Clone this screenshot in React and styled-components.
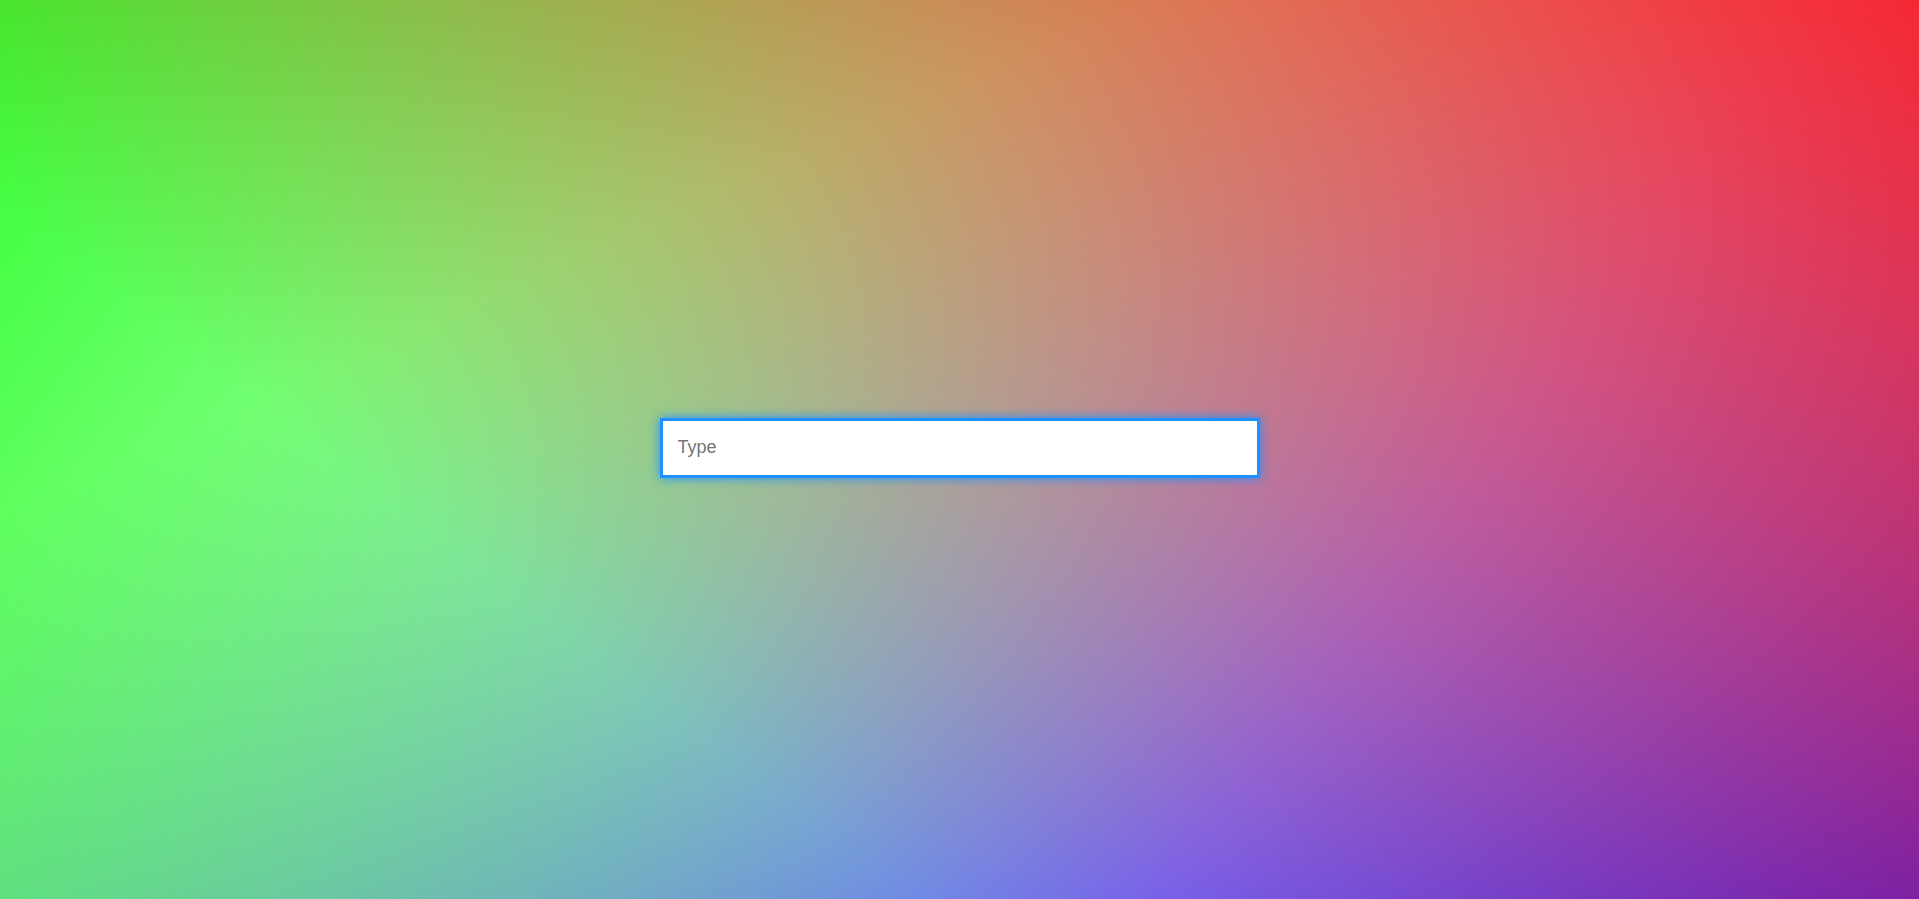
import React from "react";
import styled, { createGlobalStyle } from "styled-components";

const GlobalStyle = createGlobalStyle`
  html, body, #root {
    height: 100%;
    margin: 0;
  }
  body {
    font-family: "Liberation Sans", Arial, sans-serif;
    background: #fff;
  }
`;

const Page = styled.div`
  box-sizing: border-box;
  height: 100%;
  padding-bottom: 4px;
  display: flex;
  align-items: center;
  justify-content: center;
  background: linear-gradient(217deg, rgba(255, 0, 0, 0.8), rgba(255, 0, 0, 0) 70.71%),
    linear-gradient(127deg, rgba(0, 255, 0, 0.8), rgba(0, 255, 0, 0) 70.71%),
    linear-gradient(336deg, rgba(0, 0, 255, 0.8), rgba(0, 0, 255, 0) 70.71%);
`;

const SearchInput = styled.input`
  box-sizing: border-box;
  width: 600px;
  height: 60px;
  padding: 0 15px;
  border: 3px solid #1e90ff;
  background: #fff;
  box-shadow: 0 0 10px #1e90ff;
  font-family: "Liberation Sans", Arial, sans-serif;
  font-size: 18px;
  color: #333;
  outline: none;

  &::placeholder {
    color: #757575;
  }
`;

const App = () => {
  return (
    <>
      <GlobalStyle />
      <Page>
        <SearchInput type='text' placeholder='Type' />
      </Page>
    </>
  );
};
export default App;
